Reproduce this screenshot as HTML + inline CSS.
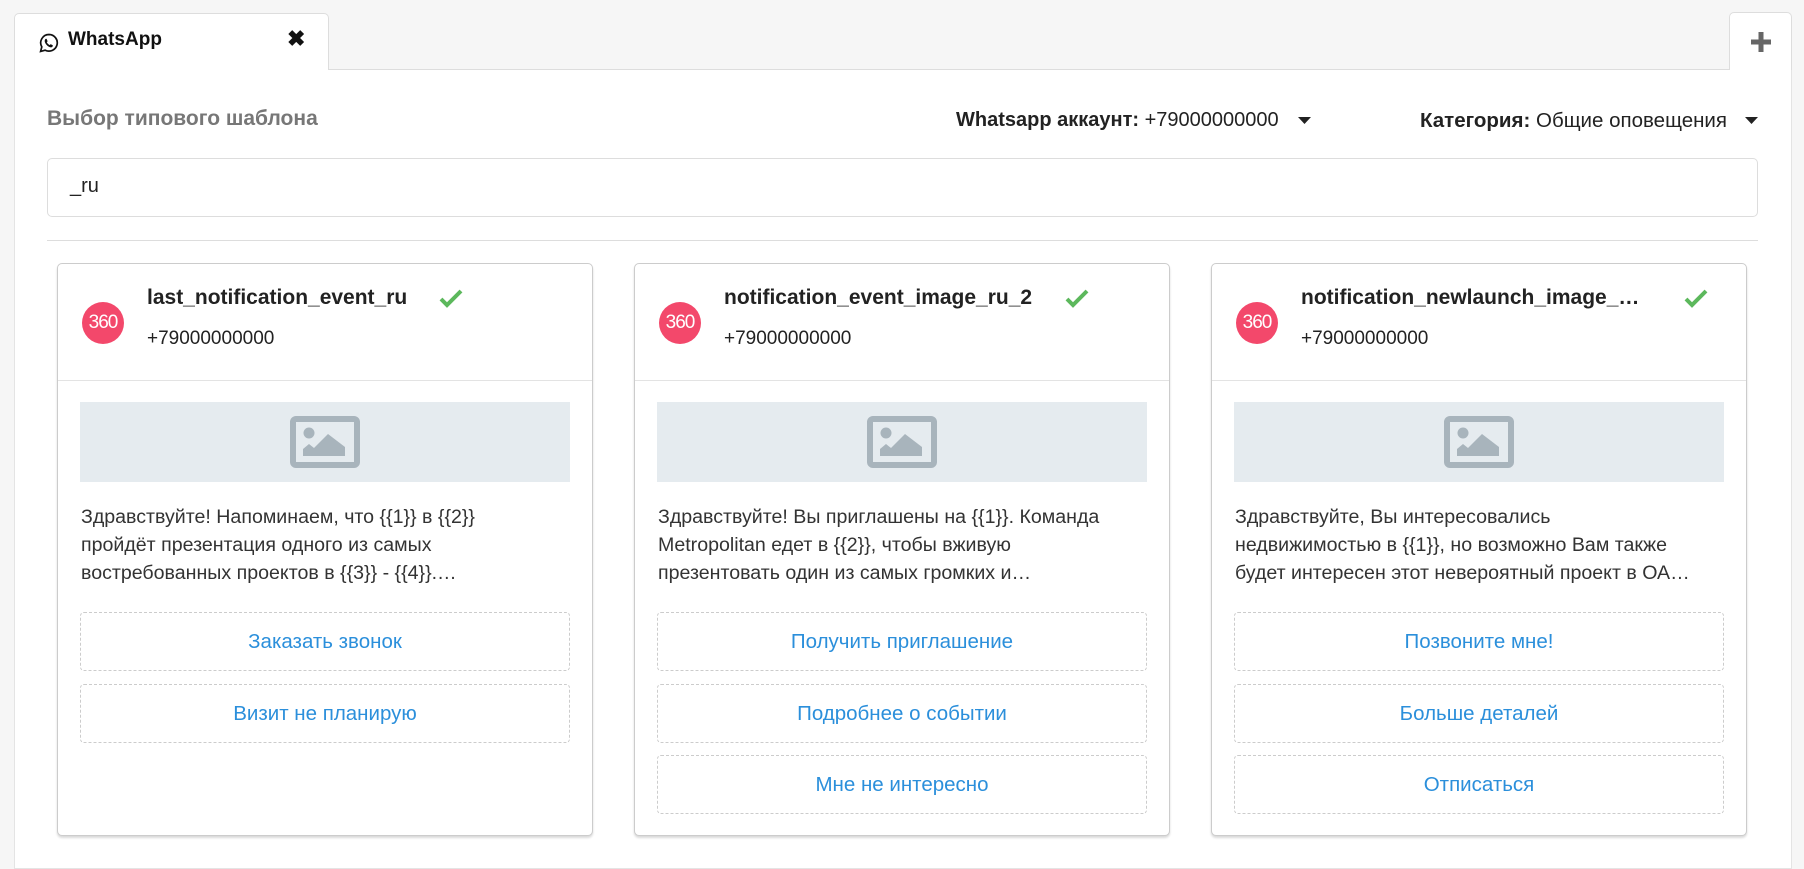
<!DOCTYPE html>
<html><head><meta charset="utf-8"><style>
*{box-sizing:border-box;margin:0;padding:0}
body{width:1804px;height:858px;overflow:hidden;background:#f6f6f6;font-family:"Liberation Sans",sans-serif;color:#333;position:relative}
.abs{position:absolute}
.tab{left:14px;top:13px;width:315px;height:57px;background:#fff;border:1px solid #ddd;border-bottom:none;border-radius:5px 5px 0 0;z-index:2}
.ptab{left:1729px;top:12px;width:63px;height:58px;background:#fff;border:1px solid #ddd;border-bottom:none;border-radius:5px 5px 0 0;z-index:2}
.panel{left:14px;top:69px;width:1778px;height:800px;background:#fff;border:1px solid #e4e4e4;border-top:1px solid #ddd}
.card{top:263px;width:536px;height:573px;background:#fff;border:1px solid #ccc;border-radius:5px;box-shadow:0 2px 2px rgba(0,0,0,.15)}
.logo{left:24px;top:38px;width:42px;height:42px;border-radius:50%;background:#f3486b;color:#fff;font-size:19px;line-height:42px;text-align:center;letter-spacing:-1px}
.title{left:89px;top:22px;font-size:21px;font-weight:bold;color:#222;white-space:nowrap}
.chk{top:24px}
.phone{left:89px;top:64px;font-size:19px;color:#222}
.hd{left:0;right:0;top:116px;border-top:1px solid #e3e3e3}
.ph{left:22px;top:138px;width:490px;height:80px;background:#e5ebef}
.ph svg{position:absolute;left:210px;top:14px}
.txt{left:23px;top:239px;font-size:19.6px;line-height:28px;white-space:nowrap;color:#333}
.btn{left:22px;width:490px;height:59px;border:1px dashed #ccc;border-radius:4px;color:#2b8fdb;font-size:20.5px;text-align:center;line-height:57px}
</style></head><body>
<div class="abs tab">
 <svg class="abs" style="left:24px;top:19px" width="20" height="20" viewBox="0 0 20 20"><path d="M10 1.5a8.3 8.3 0 0 0-7.2 12.4L1.6 18.4l4.6-1.2A8.3 8.3 0 1 0 10 1.5z" fill="none" stroke="#111" stroke-width="1.7"/><path d="M7 5.8c.4 0 .6.1.8.6l.7 1.6c.1.3 0 .5-.2.7l-.5.6c.6 1.2 1.6 2.2 2.8 2.8l.6-.6c.2-.2.5-.3.7-.2l1.6.8c.3.2.4.4.3.8-.2 1-1 1.6-2 1.5C9 14 6 11 5.7 8.3c-.1-1.2.5-2.3 1.3-2.5z" fill="#111"/></svg>
 <div class="abs" style="left:53px;top:15px;font-size:19px;font-weight:bold;color:#111">WhatsApp</div>
 <div class="abs" style="left:272px;top:12px;font-size:22px;font-weight:bold;color:#111">✖</div>
</div>
<div class="abs ptab"><svg class="abs" style="left:21px;top:19px" width="20" height="20"><rect x="7.5" y="0" width="5" height="20" fill="#666"/><rect x="0" y="7.5" width="20" height="5" fill="#666"/></svg></div>
<div class="abs panel"></div>
<div class="abs" style="left:47px;top:107px;font-size:21px;font-weight:bold;color:#777">Выбор типового шаблона</div>
<div class="abs" style="left:956px;top:109px;font-size:20px;color:#222;white-space:nowrap"><b>Whatsapp аккаунт:</b> +79000000000</div>
<svg class="abs" style="left:1298px;top:117px" width="13" height="8"><path d="M0 0h13L6.5 7z" fill="#222"/></svg>
<div class="abs" style="left:1420px;top:109px;font-size:20.5px;color:#222;white-space:nowrap"><b>Категория:</b> Общие оповещения</div>
<svg class="abs" style="left:1745px;top:117px" width="13" height="8"><path d="M0 0h13L6.5 7z" fill="#222"/></svg>
<div class="abs" style="left:47px;top:158px;width:1711px;height:59px;border:1px solid #ddd;border-radius:5px"></div>
<div class="abs" style="left:70px;top:175px;font-size:20px;color:#222">_ru</div>
<div class="abs" style="left:47px;top:240px;width:1711px;border-top:1px solid #ddd"></div>

<div class="abs card" style="left:57px">
 <div class="abs logo">360</div>
 <div class="abs title">last_notification_event_ru</div>
 <svg class="abs chk" style="left:381px" width="24" height="20"><path d="M2 11l6 6L22 3" fill="none" stroke="#5cb85c" stroke-width="4"/></svg>
 <div class="abs phone">+79000000000</div>
 <div class="abs hd"></div>
 <div class="abs ph"><svg width="70" height="52" viewBox="0 0 70 52"><rect x="3" y="3" width="64" height="46" rx="3" fill="none" stroke="#a8b4bc" stroke-width="6"/><circle cx="19" cy="17" r="5.5" fill="#a8b4bc"/><path d="M13 40v-7l6-5 5 4 14-14 17 13v9z" fill="#a8b4bc"/></svg></div>
 <div class="abs txt">Здравствуйте! Напоминаем, что {{1}} в {{2}}<br>пройдёт презентация одного из самых<br>востребованных проектов в {{3}} - {{4}}.…</div>
 <div class="abs btn" style="top:348px">Заказать звонок</div>
 <div class="abs btn" style="top:420px">Визит не планирую</div>
</div>

<div class="abs card" style="left:634px">
 <div class="abs logo">360</div>
 <div class="abs title">notification_event_image_ru_2</div>
 <svg class="abs chk" style="left:430px" width="24" height="20"><path d="M2 11l6 6L22 3" fill="none" stroke="#5cb85c" stroke-width="4"/></svg>
 <div class="abs phone">+79000000000</div>
 <div class="abs hd"></div>
 <div class="abs ph"><svg width="70" height="52" viewBox="0 0 70 52"><rect x="3" y="3" width="64" height="46" rx="3" fill="none" stroke="#a8b4bc" stroke-width="6"/><circle cx="19" cy="17" r="5.5" fill="#a8b4bc"/><path d="M13 40v-7l6-5 5 4 14-14 17 13v9z" fill="#a8b4bc"/></svg></div>
 <div class="abs txt">Здравствуйте! Вы приглашены на {{1}}. Команда<br>Metropolitan едет в {{2}}, чтобы вживую<br>презентовать один из самых громких и…</div>
 <div class="abs btn" style="top:348px">Получить приглашение</div>
 <div class="abs btn" style="top:420px">Подробнее о событии</div>
 <div class="abs btn" style="top:491px">Мне не интересно</div>
</div>

<div class="abs card" style="left:1211px">
 <div class="abs logo">360</div>
 <div class="abs title">notification_newlaunch_image_…</div>
 <svg class="abs chk" style="left:472px" width="24" height="20"><path d="M2 11l6 6L22 3" fill="none" stroke="#5cb85c" stroke-width="4"/></svg>
 <div class="abs phone">+79000000000</div>
 <div class="abs hd"></div>
 <div class="abs ph"><svg width="70" height="52" viewBox="0 0 70 52"><rect x="3" y="3" width="64" height="46" rx="3" fill="none" stroke="#a8b4bc" stroke-width="6"/><circle cx="19" cy="17" r="5.5" fill="#a8b4bc"/><path d="M13 40v-7l6-5 5 4 14-14 17 13v9z" fill="#a8b4bc"/></svg></div>
 <div class="abs txt">Здравствуйте, Вы интересовались<br>недвижимостью в {{1}}, но возможно Вам также<br>будет интересен этот невероятный проект в ОА…</div>
 <div class="abs btn" style="top:348px">Позвоните мне!</div>
 <div class="abs btn" style="top:420px">Больше деталей</div>
 <div class="abs btn" style="top:491px">Отписаться</div>
</div>
</body></html>
